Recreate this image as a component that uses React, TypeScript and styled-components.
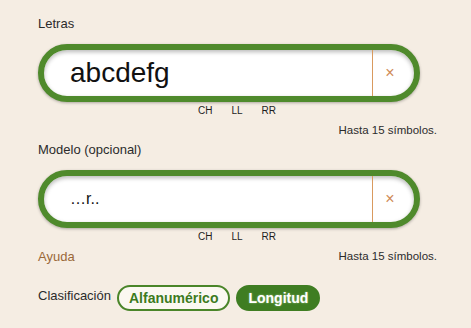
import React from "react";
import styled, { createGlobalStyle } from "styled-components";

const GlobalStyle = createGlobalStyle`
  html, body {
    margin: 0;
    padding: 0;
    background: #f5ede3;
  }
  body {
    font-family: "Liberation Sans", Helvetica, Arial, sans-serif;
    color: #2b2b2b;
  }
`;

const Page = styled.div`
  width: 399px;
  padding: 16px 0 0 38px;
`;

const Label = styled.div`
  font-size: 13px;
  line-height: 15px;
  color: #2b2b2b;
`;

const Field = styled.div`
  margin-top: 13px;
  width: 382px;
  height: 58px;
  box-sizing: border-box;
  border: 6px solid #4f8a2c;
  border-radius: 29px;
  background: #fff;
  display: flex;
  align-items: stretch;
  box-shadow: 0 1px 3px rgba(0, 0, 0, 0.3),
    inset 0 2px 4px rgba(0, 0, 0, 0.28);
  overflow: hidden;
`;

const Value = styled.div<{ $size: number }>`
  flex: 1;
  display: flex;
  align-items: center;
  padding-left: 26px;
  font-size: ${(p) => p.$size}px;
  color: #111;
`;

const Clear = styled.button`
  width: 35px;
  margin-right: 7px;
  border: none;
  border-left: 1px solid #d99a5e;
  background: transparent;
  color: #d08b55;
  font-family: "Liberation Sans", Arial, sans-serif;
  font-size: 16px;
  padding: 0;
  cursor: pointer;
`;

const Digraphs = styled.div`
  display: flex;
  gap: 19px;
  margin-top: 3px;
  padding-left: 160px;
  font-size: 10px;
  line-height: 12px;
  color: #1d1d1d;
`;

const Foot = styled.div<{ $gap: number }>`
  display: flex;
  justify-content: space-between;
  align-items: center;
  margin-top: ${(p) => p.$gap}px;
  height: 14px;
`;

const Hint = styled.span`
  font-size: 11.5px;
  color: #2b2b2b;
  margin-left: auto;
`;

const Help = styled.a`
  font-size: 13px;
  color: #9a6838;
  text-decoration: none;
`;

const Section = styled.div`
  margin-top: 5px;
`;

const ClassRow = styled.div`
  display: flex;
  align-items: center;
  margin-top: 22px;
  gap: 6px;
`;

const ClassLabel = styled(Label)`
  padding-bottom: 6px;
`;

const Pill = styled.button<{ $active?: boolean }>`
  height: 26px;
  padding: 0 10px;
  border-radius: 13px;
  border: 2px solid ${(p) => (p.$active ? "#3f7d22" : "#4a8529")};
  background: ${(p) => (p.$active ? "#3f7d22" : "#fbf8f1")};
  color: ${(p) => (p.$active ? "#fff" : "#3d7a20")};
  font-family: "Liberation Sans", Helvetica, Arial, sans-serif;
  font-weight: bold;
  font-size: 14px;
  text-shadow: ${(p) =>
    p.$active ? "0 0 2px rgba(200, 230, 180, 0.7)" : "0 0 2px #fff"};
  cursor: pointer;
`;

const Input: React.FC<{ value: string; size: number }> = ({ value, size }) => (
  <>
    <Field>
      <Value $size={size}>{value}</Value>
      <Clear>×</Clear>
    </Field>
    <Digraphs>
      <span>CH</span>
      <span>LL</span>
      <span>RR</span>
    </Digraphs>
  </>
);

export default function App() {
  return (
    <Page>
      <GlobalStyle />
      <Label>Letras</Label>
      <Input value="abcdefg" size={28} />
      <Foot $gap={6}>
        <Hint>Hasta 15 símbolos.</Hint>
      </Foot>
      <Section>
        <Label>Modelo (opcional)</Label>
      </Section>
      <Input value="…r.." size={16} />
      <Foot $gap={6}>
        <Help href="#">Ayuda</Help>
        <Hint>Hasta 15 símbolos.</Hint>
      </Foot>
      <ClassRow>
        <ClassLabel>Clasificación</ClassLabel>
        <Pill>Alfanumérico</Pill>
        <Pill $active>Longitud</Pill>
      </ClassRow>
    </Page>
  );
}
